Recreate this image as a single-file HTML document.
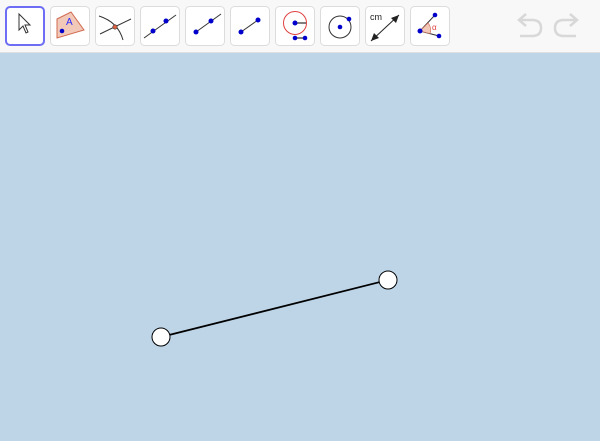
<!DOCTYPE html>
<html><head><style>
html,body{margin:0;padding:0;width:600px;height:441px;overflow:hidden;background:#bed5e8;font-family:"Liberation Sans",sans-serif}
</style></head><body>
<svg width="600" height="441" xmlns="http://www.w3.org/2000/svg" style="position:absolute;left:0;top:0">
<rect x="0" y="0" width="600" height="52" fill="#f8f8f8"/>
<rect x="0" y="52" width="600" height="1" fill="#e0e0e0"/>
<g fill="#fff" stroke="#dcdcdc" stroke-width="1">
<rect x="50.5" y="6.5" width="39" height="39" rx="4"/>
<rect x="95.5" y="6.5" width="39" height="39" rx="4"/>
<rect x="140.5" y="6.5" width="39" height="39" rx="4"/>
<rect x="185.5" y="6.5" width="39" height="39" rx="4"/>
<rect x="230.5" y="6.5" width="39" height="39" rx="4"/>
<rect x="275.5" y="6.5" width="39" height="39" rx="4"/>
<rect x="320.5" y="6.5" width="39" height="39" rx="4"/>
<rect x="365.5" y="6.5" width="39" height="39" rx="4"/>
<rect x="410.5" y="6.5" width="39" height="39" rx="4"/>
</g>
<rect x="6" y="7" width="38" height="38" rx="4" fill="#fff" stroke="#6d6df5" stroke-width="2"/>
<!-- cursor -->
<path d="M19 14 L19 30 L23 26 L26 33 L28 32 L25 25 L30 25 Z" fill="#fff" stroke="#333" stroke-width="1"/>
<!-- polygon -->
<path d="M57 19 L71 12 L84 30 L57 38 Z" fill="#f2c9b8" stroke="#d06a50" stroke-width="1"/>
<circle cx="62" cy="31" r="2.3" fill="#0000cc"/>
<text x="66" y="25" font-size="10" fill="#2a2aff">A</text>
<!-- intersect -->
<path d="M99 16 Q118 22 123 40" fill="none" stroke="#333"/>
<path d="M100 34 L131 19" fill="none" stroke="#333"/>
<circle cx="115" cy="27" r="2.2" fill="#e06040" stroke="#333" stroke-width=".6"/>
<!-- line -->
<path d="M144 38 L176 15" stroke="#333"/>
<circle cx="153" cy="31" r="2.5" fill="#0000cc"/><circle cx="166" cy="21" r="2.5" fill="#0000cc"/>
<!-- ray -->
<path d="M196 32 L221 14" stroke="#333"/>
<circle cx="196" cy="32" r="2.5" fill="#0000cc"/><circle cx="211" cy="21" r="2.5" fill="#0000cc"/>
<!-- segment -->
<path d="M241 32 L258 20" stroke="#333"/>
<circle cx="241" cy="32" r="2.5" fill="#0000cc"/><circle cx="258" cy="20" r="2.5" fill="#0000cc"/>
<!-- compass -->
<circle cx="295" cy="23" r="11.5" fill="none" stroke="#e04040"/>
<path d="M295 23 L306 23 M295 38 L305 38" stroke="#333" stroke-width="1.2"/>
<circle cx="295" cy="23" r="2.5" fill="#0000cc"/>
<circle cx="295" cy="38" r="2.3" fill="#0000cc"/><circle cx="305" cy="38" r="2.3" fill="#0000cc"/>
<!-- circle -->
<circle cx="340" cy="27" r="11" fill="none" stroke="#333"/>
<circle cx="340" cy="27" r="2.3" fill="#0000cc"/><circle cx="349" cy="19" r="2.3" fill="#0000cc"/>
<!-- distance -->
<text x="370" y="20" font-size="9" fill="#222">cm</text>
<path d="M371 41 L399 15" stroke="#222"/>
<path d="M399 15 L391 18 L396 23 Z M371 41 L379 38 L374 33 Z" fill="#222"/>
<!-- angle -->
<path d="M420 31 L435 15 M420 31 L439 36" stroke="#333"/>
<path d="M420 31 L428 23 A10 10 0 0 1 430 33.5 Z" fill="#f2c9b8" stroke="#d06a50" stroke-width=".6"/>
<text x="432" y="30" font-size="8" fill="#e04040">α</text>
<circle cx="420" cy="31" r="2.5" fill="#0000cc"/><circle cx="435" cy="15" r="2.3" fill="#0000cc"/><circle cx="439" cy="36" r="2.3" fill="#0000cc"/>
<!-- undo redo -->
<path d="M520 20 L532 20 Q541 20 541 28 Q541 36 532 36 L520 36 M526 14 L519 20 L526 26" fill="none" stroke="#d8d8d8" stroke-width="2.5"/>
<path d="M576 20 L564 20 Q555 20 555 28 Q555 36 564 36 L576 36 M570 14 L577 20 L570 26" fill="none" stroke="#d8d8d8" stroke-width="2.5"/>
<!-- segment in canvas -->
<line x1="161" y1="337" x2="388" y2="280" stroke="#000" stroke-width="1.8"/>
<circle cx="161" cy="337" r="9" fill="#fff" stroke="#000" stroke-width="1"/>
<circle cx="388" cy="280" r="9" fill="#fff" stroke="#000" stroke-width="1"/>
</svg>
</body></html>
